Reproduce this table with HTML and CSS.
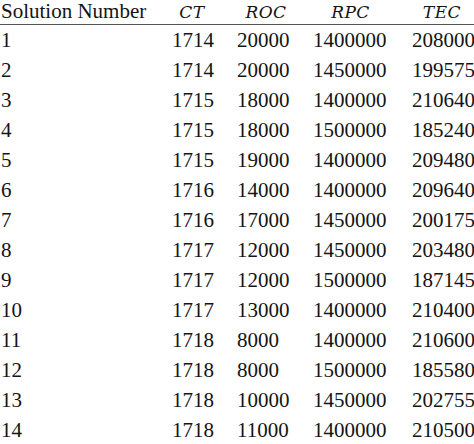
FILE: index.html
```html
<!DOCTYPE html>
<html>
<head>
<meta charset="utf-8">
<link rel="stylesheet" href="styles.css">
</head>
<body>
<div class="sheet">
  <div class="row head">
    <div class="c c1">Solution Number</div>
    <div class="c c2"><i>CT</i></div>
    <div class="c c3"><i>ROC</i></div>
    <div class="c c4"><i>RPC</i></div>
    <div class="c c5"><i>TEC</i></div>
  </div>
  <div class="row"><div class="c c1">1</div><div class="c c2">1714</div><div class="c c3">20000</div><div class="c c4">1400000</div><div class="c c5">2080000</div></div>
  <div class="row"><div class="c c1">2</div><div class="c c2">1714</div><div class="c c3">20000</div><div class="c c4">1450000</div><div class="c c5">1995750</div></div>
  <div class="row"><div class="c c1">3</div><div class="c c2">1715</div><div class="c c3">18000</div><div class="c c4">1400000</div><div class="c c5">2106400</div></div>
  <div class="row"><div class="c c1">4</div><div class="c c2">1715</div><div class="c c3">18000</div><div class="c c4">1500000</div><div class="c c5">1852400</div></div>
  <div class="row"><div class="c c1">5</div><div class="c c2">1715</div><div class="c c3">19000</div><div class="c c4">1400000</div><div class="c c5">2094800</div></div>
  <div class="row"><div class="c c1">6</div><div class="c c2">1716</div><div class="c c3">14000</div><div class="c c4">1400000</div><div class="c c5">2096400</div></div>
  <div class="row"><div class="c c1">7</div><div class="c c2">1716</div><div class="c c3">17000</div><div class="c c4">1450000</div><div class="c c5">2001750</div></div>
  <div class="row"><div class="c c1">8</div><div class="c c2">1717</div><div class="c c3">12000</div><div class="c c4">1450000</div><div class="c c5">2034800</div></div>
  <div class="row"><div class="c c1">9</div><div class="c c2">1717</div><div class="c c3">12000</div><div class="c c4">1500000</div><div class="c c5">1871450</div></div>
  <div class="row"><div class="c c1">10</div><div class="c c2">1717</div><div class="c c3">13000</div><div class="c c4">1400000</div><div class="c c5">2104000</div></div>
  <div class="row"><div class="c c1">11</div><div class="c c2">1718</div><div class="c c3">8000</div><div class="c c4">1400000</div><div class="c c5">2106000</div></div>
  <div class="row"><div class="c c1">12</div><div class="c c2">1718</div><div class="c c3">8000</div><div class="c c4">1500000</div><div class="c c5">1855800</div></div>
  <div class="row"><div class="c c1">13</div><div class="c c2">1718</div><div class="c c3">10000</div><div class="c c4">1450000</div><div class="c c5">2027550</div></div>
  <div class="row"><div class="c c1">14</div><div class="c c2">1718</div><div class="c c3">11000</div><div class="c c4">1400000</div><div class="c c5">2105000</div></div>
</div>
</body>
</html>
```
FILE: styles.css
```css
html, body {
  margin: 0;
  padding: 0;
  background: #ffffff;
  overflow: hidden;
}
body {
  width: 474px;
  height: 444px;
}
.sheet {
  width: 520px;
  font-family: "Liberation Serif", "Times New Roman", serif;
  font-size: 21px;
  color: #141414;
}
.row {
  display: grid;
  grid-template-columns: 172px 65px 76px 99px 108px;
  line-height: 30px;
  white-space: nowrap;
}
.head {
  line-height: 23px;
  border-bottom: 1.5px solid #555;
}
.c1 {
  padding-left: 1px;
}
.head .c2, .head .c3, .head .c4, .head .c5 {
  text-align: center;
}
.head i {
  font-family: "DejaVu Serif", serif;
  font-style: italic;
  font-size: 17px;
  letter-spacing: 0.5px;
}
.head .c2 { padding-right: 25px; }
.head .c3 { padding-right: 18px; }
.head .c4 { padding-right: 24px; }
.head .c5 { padding-right: 48px; }
```
